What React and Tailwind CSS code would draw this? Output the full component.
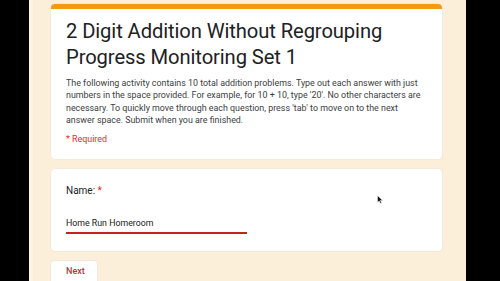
import React from "react";

const App = () => {
  return (
    <div className="flex w-[500px] h-[281px] overflow-hidden bg-black font-['Roboto',sans-serif]">
      {/* left black edge */}
      <div className="w-[29px] shrink-0 bg-black" />

      {/* form page */}
      <div className="w-[437px] shrink-0 bg-[#fbefd9] border-l-[4px] border-[#fdf4e6] pl-[17px] pt-[3px]">
        {/* header card */}
        <div className="w-[393px] bg-white rounded-[5px] overflow-hidden border border-[#f3ead9]">
          <div className="h-[5px] bg-[#f29a12]" />
          <div className="px-[15px] pt-[9px] pb-[14px]">
            <h1 className="text-[20.2px] leading-[26px] text-[#202124] tracking-[-0.1px]">
              2 Digit Addition Without Regrouping Progress Monitoring Set 1
            </h1>
            <p className="mt-[7px] text-[8.9px] leading-[12.4px] text-[#3c4043] whitespace-nowrap">
              The following activity contains 10 total addition problems. Type out each answer with just
              <br />
              numbers in the space provided. For example, for 10 + 10, type '20'. No other characters are
              <br />
              necessary. To quickly move through each question, press 'tab' to move on to the next
              <br />
              answer space. Submit when you are finished.
            </p>
            <div className="mt-[6px] text-[8.9px] leading-[12px] text-[#d93025]">* Required</div>
          </div>
        </div>

        {/* name question card */}
        <div className="relative mt-[8px] w-[393px] h-[84px] bg-white rounded-[5px] border border-[#f3ead9] px-[15px] pt-[15px]">
          <div className="text-[10px] leading-[14px] text-[#202124]">
            Name: <span className="text-[#d93025]">*</span>
          </div>
          <div className="mt-[19px] w-[181px] border-b-[2px] border-[#c5221f] pb-[3px] text-[8.8px] leading-[12px] text-[#202124]">
            Home Run Homeroom
          </div>
          {/* mouse cursor */}
          <svg
            className="absolute left-[326px] top-[26px]"
            width="6"
            height="9"
            viewBox="0 0 6 9"
          >
            <path d="M0.5 0.5 L0.5 7.5 L2.2 5.9 L3.5 8.5 L4.6 8 L3.4 5.4 L5.6 5.4 Z" fill="#111" stroke="#fff" strokeWidth="0.5" />
          </svg>
        </div>

        {/* next button */}
        <div className="mt-[8px] w-[48px] h-[30px] bg-white rounded-[4px] border border-[#f3ead9] pl-[15px] pt-[4px] text-[9px] font-medium text-[#b0383a]">
          Next
        </div>
      </div>

      {/* right black edge */}
      <div className="flex-1 bg-black" />
    </div>
  );
};

export default App;
